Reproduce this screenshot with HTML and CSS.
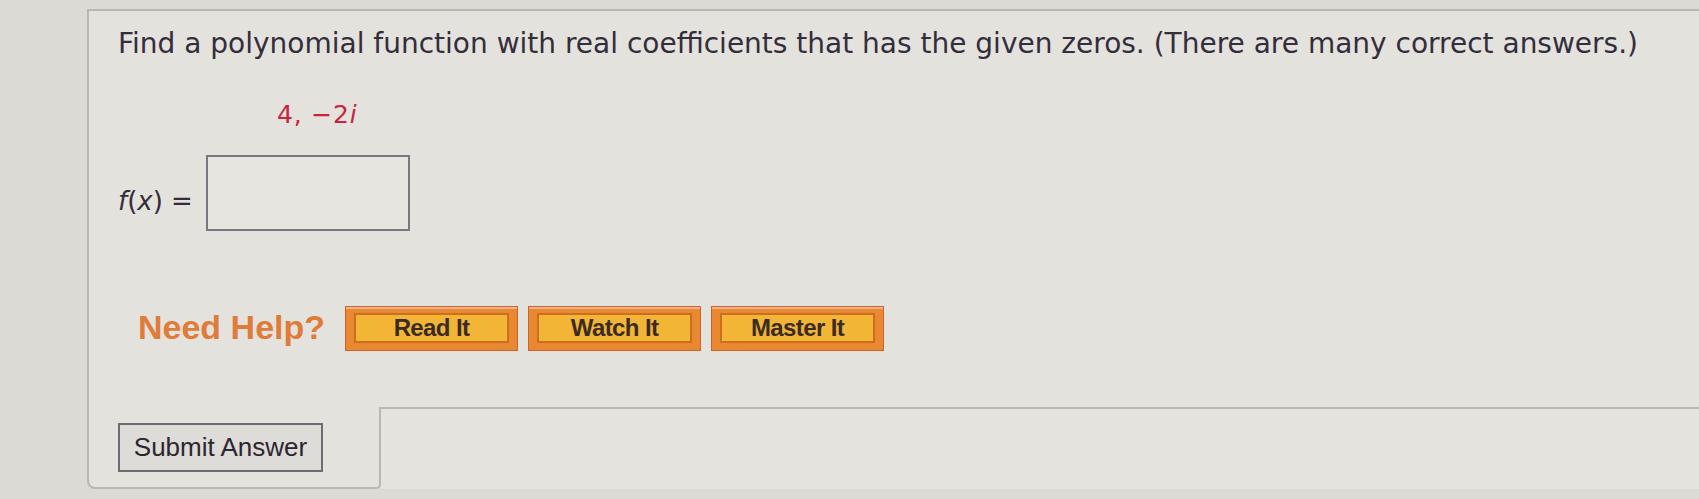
FILE: index.html
```html
<!DOCTYPE html>
<html lang="en">
<head>
<meta charset="utf-8">
<title>Question</title>
<link rel="stylesheet" href="styles.css">
</head>
<body>
<div class="page">
  <section class="question">
    <p class="prompt">Find a polynomial function with real coefficients that has the given zeros. (There are many correct answers.)</p>
    <p class="zeros">4, &minus;2<i>i</i></p>
    <div class="answer-row">
      <span class="fx"><i>f</i>(<i>x</i>) =</span>
      <span class="answer-box"></span>
    </div>
    <div class="help-row">
      <span class="help-label">Need Help?</span>
      <span class="help-btn"><span class="help-inner">Read It</span></span>
      <span class="help-btn"><span class="help-inner">Watch It</span></span>
      <span class="help-btn"><span class="help-inner">Master It</span></span>
    </div>
  </section>
  <div class="footer">
    <div class="tab">
      <span class="submit">Submit Answer</span>
    </div>
    <div class="filler"></div>
  </div>
</div>
</body>
</html>
```

FILE: styles.css
```css
html, body {
  margin: 0;
  padding: 0;
}
body {
  background: #dcdad5;
  width: 1699px;
  height: 499px;
  overflow: hidden;
}
.page {
  margin-left: 87px;
  padding-top: 9px;
}
.question {
  border-top: 2px solid #b9b7b2;
  border-left: 2px solid #b9b7b2;
  background: #e4e2dd;
  padding: 17px 0 56px 29px;
}
.prompt {
  margin: 0;
  font-family: "DejaVu Sans", Verdana, sans-serif;
  font-size: 28px;
  line-height: 32px;
  color: #342d3c;
  white-space: nowrap;
}
.zeros {
  margin: 40px 0 0 159px;
  font-family: "DejaVu Sans", Verdana, sans-serif;
  font-size: 25px;
  line-height: 29px;
  letter-spacing: 0.8px;
  color: #c8233f;
}
.answer-row {
  margin-top: 26px;
  display: flex;
  align-items: center;
  gap: 13px;
}
.fx {
  font-family: "DejaVu Sans", Verdana, sans-serif;
  font-size: 26px;
  color: #342d3c;
  padding-top: 16px;
}
.answer-box {
  display: block;
  width: 204px;
  height: 76px;
  box-sizing: border-box;
  border: 2px solid #7b7680;
  background: #e7e5e0;
}
.help-row {
  margin-top: 74px;
  margin-left: 20px;
  display: flex;
  align-items: center;
  gap: 10px;
  height: 46px;
}
.help-label {
  font-family: "Liberation Sans", Arial, sans-serif;
  font-weight: bold;
  font-size: 34px;
  color: #e07c3a;
  margin-right: 10px;
  padding-bottom: 2px;
}
.help-btn {
  display: flex;
  box-sizing: border-box;
  width: 173px;
  height: 45px;
  padding: 6px 8px 7px 8px;
  border: 1px solid #c8652c;
  background: #ea8831;
  box-shadow: inset 0 2px 0 #f3b38e;
}
.help-inner {
  flex: 1;
  display: flex;
  align-items: center;
  justify-content: center;
  border: 2px solid #c96f20;
  background: #f2b536;
  font-family: "Liberation Sans", Arial, sans-serif;
  font-weight: bold;
  font-size: 24px;
  letter-spacing: -0.6px;
  color: #3a2b24;
}
.footer {
  display: flex;
}
.tab {
  width: 261px;
  border-left: 2px solid #b9b7b2;
  border-right: 2px solid #b9b7b2;
  border-bottom: 2px solid #b9b7b2;
  border-bottom-left-radius: 8px;
  border-bottom-right-radius: 5px;
  background: #e4e2dd;
  padding: 16px 0 15px 29px;
}
.submit {
  display: flex;
  align-items: center;
  justify-content: center;
  box-sizing: border-box;
  width: 205px;
  height: 49px;
  border: 2px solid #6f6a73;
  background: #dedcd8;
  font-family: "Liberation Sans", Arial, sans-serif;
  font-size: 26px;
  color: #2b2630;
}
.filler {
  flex: 1;
  border-top: 2px solid #b9b7b2;
  background: #e5e3de;
}
```
